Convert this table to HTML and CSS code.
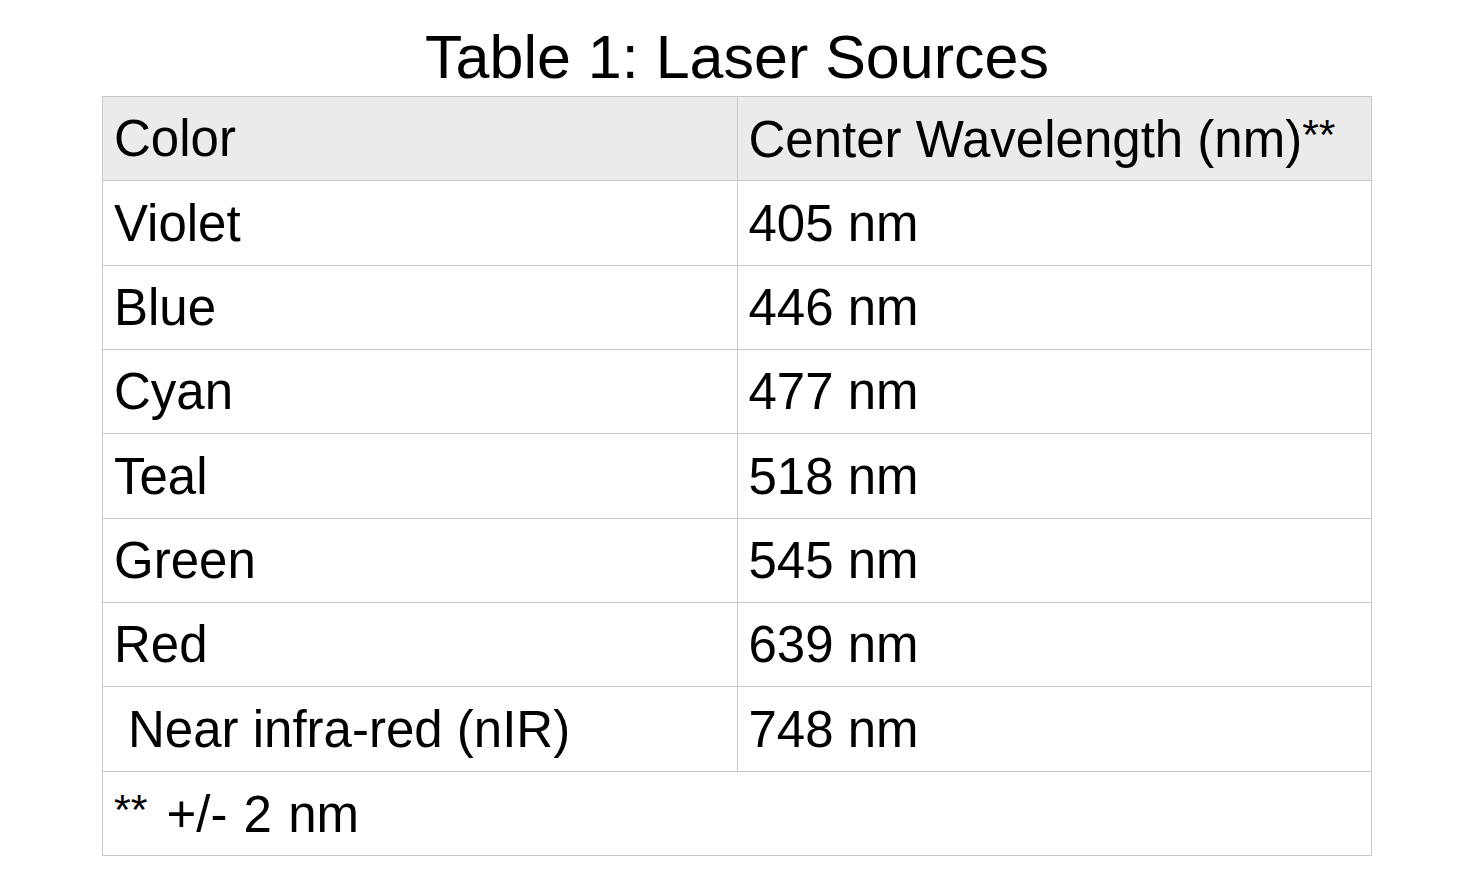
FILE: index.html
```html
<!DOCTYPE html>
<html lang="en">
<head>
<meta charset="utf-8">
<title>Table 1: Laser Sources</title>
<link rel="stylesheet" href="styles.css">
</head>
<body>
<main class="page">
  <section class="figure">
    <h1 class="caption">Table 1: Laser Sources</h1>
    <table class="lasers">
      <thead>
        <tr><th>Color</th><th>Center Wavelength (nm)<span class="ast">**</span></th></tr>
      </thead>
      <tbody>
        <tr><td>Violet</td><td>405 nm</td></tr>
        <tr><td>Blue</td><td>446 nm</td></tr>
        <tr><td>Cyan</td><td>477 nm</td></tr>
        <tr><td>Teal</td><td>518 nm</td></tr>
        <tr><td>Green</td><td>545 nm</td></tr>
        <tr><td>Red</td><td>639 nm</td></tr>
        <tr><td class="indent">Near infra-red (nIR)</td><td>748 nm</td></tr>
        <tr><td colspan="2" class="note"><span class="ast">**</span> +/- 2 nm</td></tr>
      </tbody>
    </table>
  </section>
</main>
</body>
</html>
```
FILE: styles.css
```css
html, body {
  margin: 0;
  padding: 0;
  background: #ffffff;
}

body {
  font-family: "Liberation Sans", Arial, Helvetica, sans-serif;
  color: #000000;
}

.page {
  padding: 22px 0 0 102px;
}

.figure {
  width: 1270px;
  display: flex;
  flex-direction: column;
}

.caption {
  margin: 0 0 4px 0;
  font-size: 61px;
  line-height: 70px;
  font-weight: normal;
  text-align: center;
}

.lasers {
  width: 1270px;
  border-collapse: collapse;
  table-layout: fixed;
  font-size: 51px;
}

.lasers th,
.lasers td {
  border: 1px solid #c8c8c8;
  height: 83.35px;
  padding: 0 0 0 11px;
  text-align: left;
  vertical-align: middle;
  font-weight: normal;
  line-height: 1;
  white-space: nowrap;
}

.lasers th {
  background: #ebebeb;
}

.lasers td.indent {
  padding-left: 25px;
}

.lasers td.note {
  word-spacing: 2px;
}

.ast {
  font-size: 0.84em;
  vertical-align: 0.18em;
  letter-spacing: 0;
  word-spacing: 0;
}

.note .ast {
  margin-right: 3px;
}
```
